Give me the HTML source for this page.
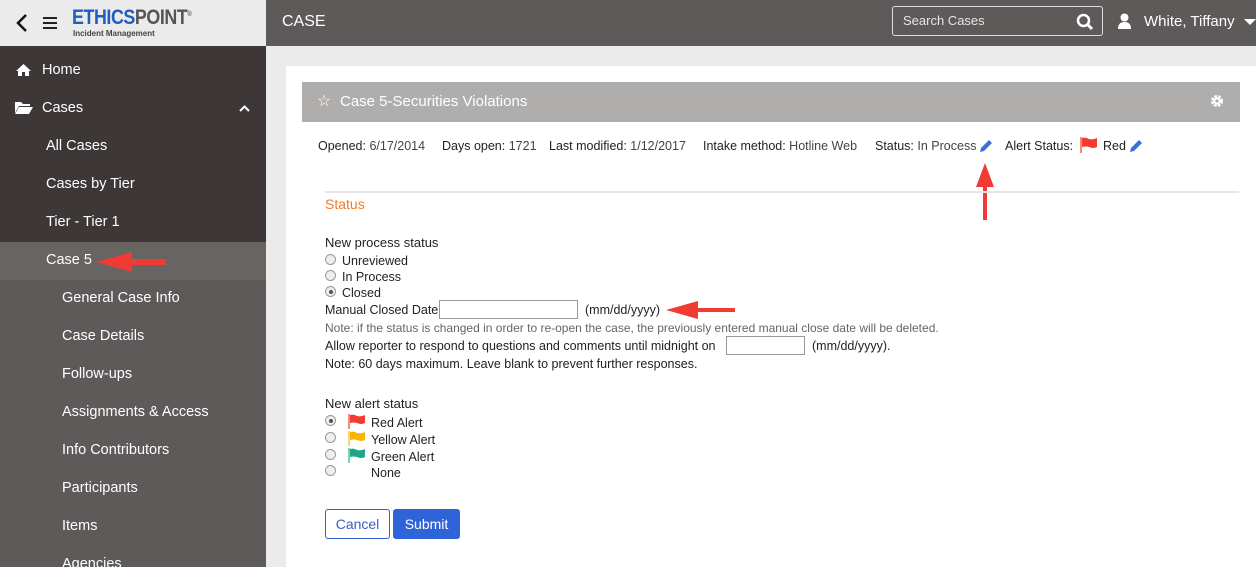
<!DOCTYPE html>
<html style="width:1256px;height:567px;overflow:hidden"><head><meta charset="utf-8"><style>
*{box-sizing:border-box;margin:0;padding:0}
body{width:1256px;height:567px;overflow:hidden;font-family:"Liberation Sans",sans-serif;background:#ebebeb;position:relative;color:#333}
.abs{position:absolute}
#logo{left:0;top:0;width:266px;height:46px;background:#ebebeb}
#top{left:266px;top:0;width:990px;height:46px;background:#5e5a59;color:#fff}
#side{left:0;top:46px;width:266px;height:521px;background:#5e5a59;overflow:hidden}
.si{position:absolute;left:0;width:266px;height:38px;line-height:38px;color:#fff;font-size:14.5px}
.t{position:absolute;font-size:12.5px;color:#222;white-space:nowrap}
.radio{position:absolute;width:11px;height:11px;border:1px solid #999;border-radius:50%;background:#eee}
.radio.on::after{content:"";position:absolute;left:2.5px;top:2.5px;width:4px;height:4px;border-radius:50%;background:#555}
.inp{position:absolute;border:1px solid #999;height:19px;background:#fff}
</style></head><body>
<div id="logo" class="abs">
<svg class="abs" style="left:15px;top:13px" width="14" height="20"><path d="M11 2 L3 10 L11 18" stroke="#111" stroke-width="2.5" fill="none"/></svg>
<div class="abs" style="left:43px;top:17px;width:14px;height:2px;background:#222;box-shadow:0 5px 0 #222,0 10px 0 #222"></div>
<div class="abs" style="left:72px;top:6px;font-size:21px;font-weight:bold;letter-spacing:-0.5px;transform:scaleX(.85);transform-origin:left"><span style="color:#1f5cc4">ETHICS</span><span style="color:#555">POINT</span><sup style="font-size:7px;color:#555">®</sup></div>
<div class="abs" style="left:73px;top:29px;font-size:8px;color:#444;font-weight:bold">Incident Management</div>
</div>
<div id="top" class="abs">
<div class="abs" style="left:16px;top:13px;font-size:16px">CASE</div>
<div class="abs" style="left:626px;top:6px;width:211px;height:30px;border:1px solid #ddd;border-radius:3px;font-size:13px;line-height:28px;padding-left:10px;color:#e6e6e6">Search Cases
<svg class="abs" style="right:8px;top:6px" width="18" height="18"><circle cx="7.5" cy="7.5" r="5.5" stroke="#fff" stroke-width="2.5" fill="none"/><path d="M11.5 11.5 L16 16" stroke="#fff" stroke-width="3"/></svg></div>
<svg class="abs" style="left:852px;top:13px" width="13" height="16"><circle cx="6.5" cy="4.5" r="4" fill="#fff"/><path d="M0 16 Q0 9 6.5 9 Q13 9 13 16Z" fill="#fff"/></svg>
<div class="abs" style="left:878px;top:13px;font-size:15px">White, Tiffany</div>
<svg class="abs" style="left:978px;top:19px" width="12" height="8"><path d="M0 0 L12 0 L6 6Z" fill="#fff"/></svg>
</div>
<div id="side" class="abs">
<div class="abs" style="left:0;top:0;width:266px;height:196px;background:#3d3837"></div>
<div class="abs" style="left:0;top:196px;width:266px;height:38px;background:#686462"></div>
<div class="si" style="top:5px;padding-left:42px">Home</div>
<svg class="abs" style="left:15px;top:17px" width="17" height="14"><path d="M8.5 1 L1 8 H3 V13 H7 V9 H10 V13 H14 V8 H16Z" fill="#fff"/></svg>
<div class="si" style="top:43px;padding-left:42px">Cases</div>
<svg class="abs" style="left:15px;top:55px" width="18" height="13"><path d="M0 1 H6 L8 3 H15 V5 H4 L0 12Z M4 6 H18 L14 13 H0Z" fill="#fff"/></svg>
<svg class="abs" style="left:239px;top:59px" width="11" height="7"><path d="M1 6 L5.5 1.5 L10 6" stroke="#fff" stroke-width="2" fill="none"/></svg>
<div class="si" style="top:81px;padding-left:46px">All Cases</div>
<div class="si" style="top:119px;padding-left:46px">Cases by Tier</div>
<div class="si" style="top:157px;padding-left:46px">Tier - Tier 1</div>
<div class="si" style="top:195px;padding-left:46px">Case 5</div>
<svg class="abs" style="left:96px;top:205px" width="72" height="22"><path d="M0 11 L36 1 V8 H70 V14 H36 V21Z" fill="#ef3b34"/></svg>
<div class="si" style="top:233px;padding-left:62px">General Case Info</div>
<div class="si" style="top:271px;padding-left:62px">Case Details</div>
<div class="si" style="top:309px;padding-left:62px">Follow-ups</div>
<div class="si" style="top:347px;padding-left:62px">Assignments &amp; Access</div>
<div class="si" style="top:385px;padding-left:62px">Info Contributors</div>
<div class="si" style="top:423px;padding-left:62px">Participants</div>
<div class="si" style="top:461px;padding-left:62px">Items</div>
<div class="si" style="top:499px;padding-left:62px">Agencies</div>
</div>
<div class="abs" style="left:286px;top:66px;width:970px;height:501px;background:#fff"></div>
<div class="abs" style="left:302px;top:82px;width:938px;height:40px;background:#b0aeac;color:#fff;font-size:15px;line-height:40px"><span style="position:absolute;left:15px;font-size:16px">☆</span><span style="position:absolute;left:38px">Case 5-Securities Violations</span>
<svg class="abs" style="left:908px;top:12px" width="14" height="14"><circle cx="7" cy="7" r="4.5" stroke="#fff" stroke-width="3" stroke-dasharray="2.5 1.2" fill="none"/><circle cx="7" cy="7" r="3.5" fill="#fff"/><circle cx="7" cy="7" r="1.6" fill="#b0aeac"/></svg></div>
<div class="t" style="left:318px;top:139px">Opened: <span style="color:#444">6/17/2014</span></div>
<div class="t" style="left:442px;top:139px">Days open: <span style="color:#444">1721</span></div>
<div class="t" style="left:549px;top:139px">Last modified: <span style="color:#444">1/12/2017</span></div>
<div class="t" style="left:703px;top:139px">Intake method: <span style="color:#444">Hotline Web</span></div>
<div class="t" style="left:875px;top:139px">Status: <span style="color:#444">In Process</span></div>
<svg class="abs" style="left:979px;top:139px" width="14" height="14"><path d="M1 13 L2 9 L10 1 L13 4 L5 12Z" fill="#3b6fd8"/></svg>
<div class="t" style="left:1005px;top:139px">Alert Status:</div>
<svg class="abs" style="left:1080px;top:137px" width="18" height="16"><rect x="0" y="0" width="2" height="16" fill="#f08a7a"/><path d="M2 1 Q6 0 9 2 Q13 3 17 1 V10 Q13 12 9 10 Q6 9 2 10Z" fill="#f23c30"/></svg>
<div class="t" style="left:1103px;top:139px">Red</div>
<svg class="abs" style="left:1129px;top:139px" width="14" height="14"><path d="M1 13 L2 9 L10 1 L13 4 L5 12Z" fill="#3b6fd8"/></svg>
<svg class="abs" style="left:976px;top:163px" width="18" height="58"><path d="M9 0 L18 24 H11 V57 H7 V24 H0Z" fill="#ef3b34"/></svg>
<div class="abs" style="left:325px;top:191px;width:914px;height:2px;background:#e6e6e6"></div>
<div class="t" style="left:325px;top:196px;font-size:14px;color:#f07c2c">Status</div>
<div class="t" style="left:325px;top:235px;font-size:13px">New process status</div>
<div class="radio" style="left:325px;top:254px"></div><div class="t" style="left:342px;top:254px">Unreviewed</div>
<div class="radio" style="left:325px;top:270px"></div><div class="t" style="left:342px;top:270px">In Process</div>
<div class="radio on" style="left:325px;top:286px"></div><div class="t" style="left:342px;top:286px">Closed</div>
<div class="t" style="left:325px;top:303px">Manual Closed Date</div>
<div class="inp" style="left:439px;top:300px;width:139px"></div>
<div class="t" style="left:585px;top:303px">(mm/dd/yyyy)</div>
<svg class="abs" style="left:666px;top:301px" width="70" height="18"><path d="M0 9 L32 0 V7 H69 V11 H32 V18Z" fill="#ef3b34"/></svg>
<div class="t" style="left:325px;top:321px;font-size:12px;color:#666">Note: if the status is changed in order to re-open the case, the previously entered manual close date will be deleted.</div>
<div class="t" style="left:325px;top:339px">Allow reporter to respond to questions and comments until midnight on</div>
<div class="inp" style="left:726px;top:336px;width:79px"></div>
<div class="t" style="left:812px;top:339px">(mm/dd/yyyy).</div>
<div class="t" style="left:325px;top:357px">Note: 60 days maximum. Leave blank to prevent further responses.</div>
<div class="t" style="left:325px;top:396px;font-size:13px">New alert status</div>
<div class="radio on" style="left:325px;top:415px"></div>
<div class="radio" style="left:325px;top:432px"></div>
<div class="radio" style="left:325px;top:449px"></div>
<div class="radio" style="left:325px;top:465px"></div>
<svg class="abs" style="left:348px;top:414px" width="18" height="15"><rect width="2" height="15" fill="#f08a7a"/><path d="M2 1 Q6 0 9 2 Q13 3 17 1 V9 Q13 11 9 9 Q6 8 2 9Z" fill="#f23c30"/></svg>
<svg class="abs" style="left:348px;top:431px" width="18" height="15"><rect width="2" height="15" fill="#f7d37a"/><path d="M2 1 Q6 0 9 2 Q13 3 17 1 V9 Q13 11 9 9 Q6 8 2 9Z" fill="#f7b500"/></svg>
<svg class="abs" style="left:348px;top:448px" width="18" height="15"><rect width="2" height="15" fill="#7fcfb0"/><path d="M2 1 Q6 0 9 2 Q13 3 17 1 V9 Q13 11 9 9 Q6 8 2 9Z" fill="#1ea58a"/></svg>
<div class="t" style="left:371px;top:416px">Red Alert</div>
<div class="t" style="left:371px;top:433px">Yellow Alert</div>
<div class="t" style="left:371px;top:450px">Green Alert</div>
<div class="t" style="left:371px;top:466px">None</div>
<div class="abs" style="left:325px;top:509px;width:65px;height:30px;border:1px solid #2f5fd0;border-radius:3px;color:#3b5fc0;font-size:14px;line-height:28px;text-align:center">Cancel</div>
<div class="abs" style="left:393px;top:509px;width:67px;height:30px;background:#2f63d8;border-radius:3px;color:#fff;font-size:14px;line-height:30px;text-align:center">Submit</div>
</body></html>
